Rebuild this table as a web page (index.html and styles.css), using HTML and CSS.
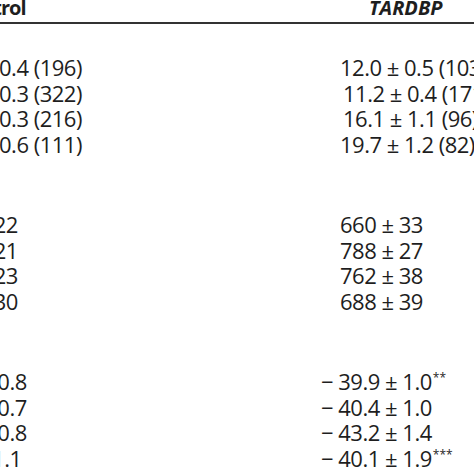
FILE: index.html
```html
<!DOCTYPE html>
<html lang="en">
<head>
<meta charset="utf-8">
<title>Table</title>
<link rel="stylesheet" href="styles.css">
</head>
<body>
<div class="table">
  <div class="row head">
    <div class="cell c1 hd-control">Control</div>
    <div class="cell c2 hd-tardbp"><em>TARDBP</em></div>
  </div>

  <div class="section first">
    <div class="row"><div class="cell c1">11.5 ± 0.4 (196)</div><div class="cell c2">12.0 ± 0.5 (103)</div></div>
    <div class="row"><div class="cell c1">10.9 ± 0.3 (322)</div><div class="cell c2 shift">11.2 ± 0.4 (171)</div></div>
    <div class="row"><div class="cell c1">14.8 ± 0.3 (216)</div><div class="cell c2 shift">16.1 ± 1.1 (96)</div></div>
    <div class="row"><div class="cell c1">18.2 ± 0.6 (111)</div><div class="cell c2">19.7 ± 1.2 (82)</div></div>
  </div>

  <div class="section">
    <div class="row"><div class="cell c1">712 ± 22</div><div class="cell c2">660 ± 33</div></div>
    <div class="row"><div class="cell c1">745 ± 21</div><div class="cell c2">788 ± 27</div></div>
    <div class="row"><div class="cell c1">731 ± 23</div><div class="cell c2">762 ± 38</div></div>
    <div class="row"><div class="cell c1">698 ± 30</div><div class="cell c2">688 ± 39</div></div>
  </div>

  <div class="section">
    <div class="row"><div class="cell c1 neg">− 43.6 ± 0.8</div><div class="cell c2 neg">− 39.9 ± 1.0<sup>**</sup></div></div>
    <div class="row"><div class="cell c1 neg">− 42.1 ± 0.7</div><div class="cell c2 neg">− 40.4 ± 1.0</div></div>
    <div class="row"><div class="cell c1 neg">− 44.5 ± 0.8</div><div class="cell c2 neg">− 43.2 ± 1.4</div></div>
    <div class="row"><div class="cell c1 neg">−41.1 ± 1.1</div><div class="cell c2 neg">− 40.1 ± 1.9<sup>***</sup></div></div>
  </div>
</div>
</body>
</html>
```

FILE: styles.css
```css
html, body {
  margin: 0;
  padding: 0;
  background: #ffffff;
  overflow: hidden;
}

body {
  width: 474px;
  height: 474px;
  font-family: "Open Sans", "Noto Sans", sans-serif;
  color: #1e1e1e;
}

.table {
  margin-left: -65px;
}

.row {
  display: grid;
  grid-template-columns: 405px 1fr;
  font-size: 22px;
  letter-spacing: -0.5px;
  line-height: 25.5px;
  white-space: nowrap;
}

.head {
  font-size: 20px;
  font-weight: 700;
  letter-spacing: 0;
  line-height: 16px;
  padding-bottom: 6px;
  border-bottom: 2px solid #333333;
}

.hd-control {
  padding-left: 23px;
  letter-spacing: -1px;
}

.hd-tardbp {
  padding-left: 29px;
}

.hd-tardbp em {
  font-style: italic;
}

.section {
  margin-top: 55px;
}

.section.first {
  margin-top: 31px;
}

.shift {
  padding-left: 3px;
}

.neg {
  margin-left: -19px;
}

sup {
  font-size: 12px;
  letter-spacing: 0;
  line-height: 0;
  vertical-align: 8px;
  margin-left: 1px;
}
```
